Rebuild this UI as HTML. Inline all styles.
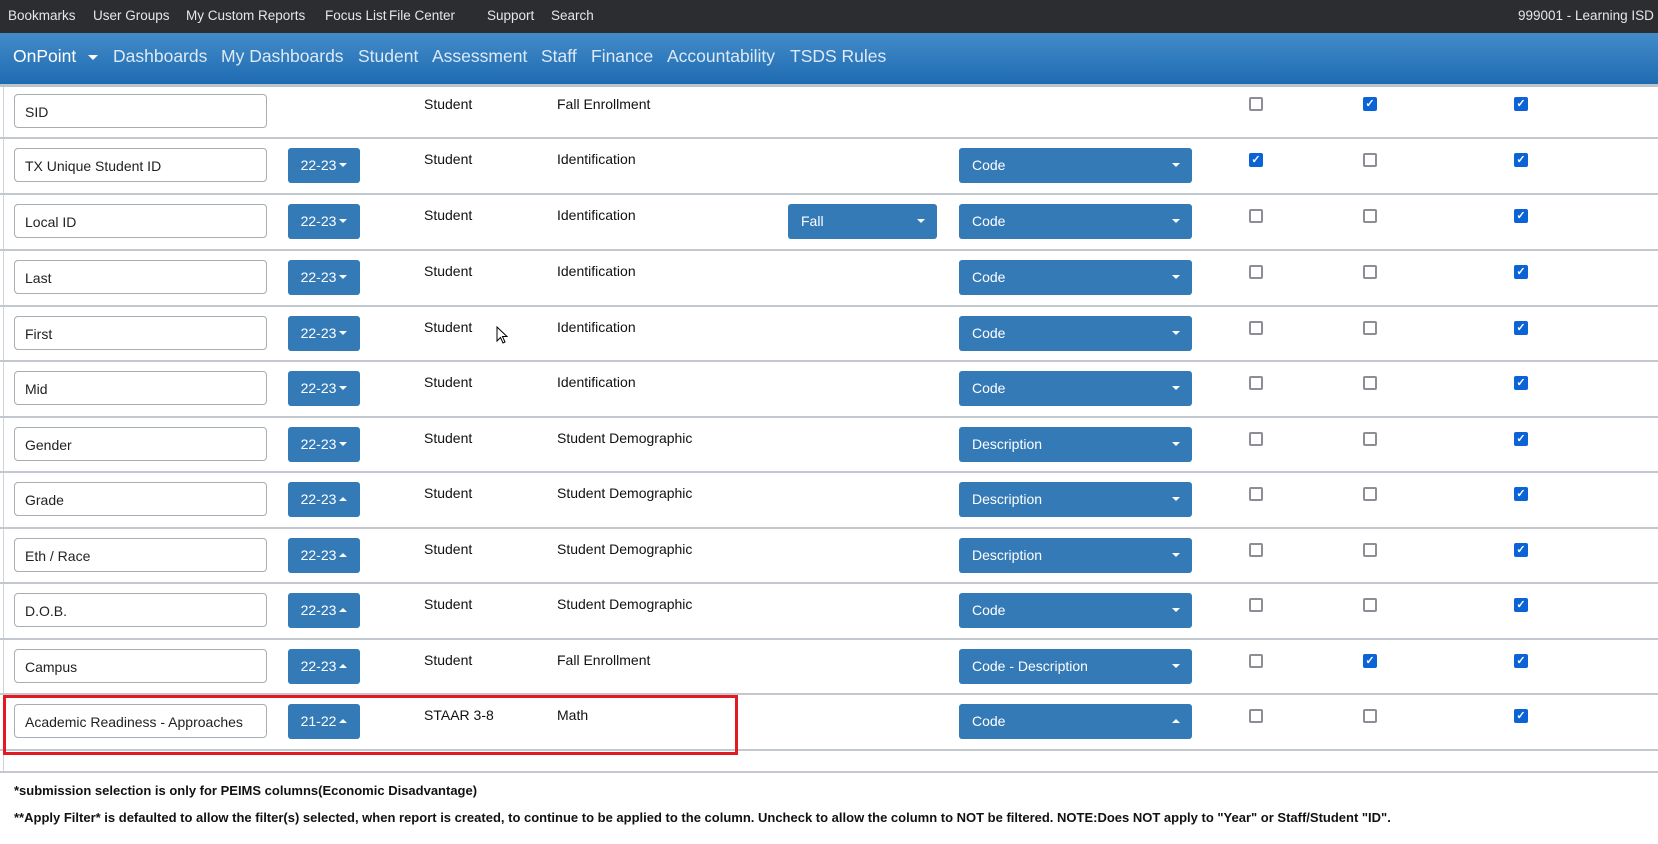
<!DOCTYPE html>
<html><head><meta charset="utf-8"><style>
*{box-sizing:border-box;margin:0;padding:0}
body{width:1658px;height:844px;overflow:hidden;background:#fff;font-family:"Liberation Sans",Arial,sans-serif;position:relative;color:#111}
.top{position:absolute;left:0;top:0;width:1658px;height:33px;background:#2b2d31;color:#e6e6e6;font-size:13.5px}
.top span{position:absolute;top:8px;white-space:nowrap}
.nav{position:absolute;left:0;top:33px;width:1658px;height:54px;background:linear-gradient(#438cc9,#1f6bb2);border-bottom:3px solid #bcc4cb}
.nav span{position:absolute;top:13px;font-size:17.5px;color:#dce9f6;white-space:nowrap}
.vl{position:absolute;left:3px;top:87px;width:1px;height:684px;background:#cdd3d8}
.sep{position:absolute;left:0;width:1658px;height:2px;background:#c2c8ce}
.in{position:absolute;left:14px;width:253px;height:34px;border:1px solid #a9acb0;border-radius:4px;font-size:14px;padding:9px 10px;color:#222;white-space:nowrap}
.b{position:absolute;background:#337ab7;color:#fff;border-radius:3px;height:35px;font-size:14px;padding-top:9px;white-space:nowrap}
.yr{left:288px;width:72px;text-align:center}
.dd{left:959px;width:233px;padding-left:13px}
.fall{left:788px;width:149px;padding-left:13px}
.car{position:absolute;right:12px;top:15px;width:0;height:0;border-left:4px solid transparent;border-right:4px solid transparent;border-top:4px solid #fff}
.up{border-top:none;border-bottom:4px solid #fff}
.yc{display:inline-block;width:0;height:0;border-left:4px solid transparent;border-right:4px solid transparent;border-top:4px solid #fff;vertical-align:middle;margin-left:3px;margin-top:-2px}
.yc.up{border-top:none;border-bottom:4px solid #fff}
.t{position:absolute;font-size:14px;white-space:nowrap;color:#111}
.cb{position:absolute;width:14px;height:14px;border:2px solid #8d8d96;border-radius:2px}
.cb.on{border:none;background:#0b63d6;color:#fff;font-size:11px;line-height:14px;text-align:center;font-weight:bold}
.red{position:absolute;left:3px;top:695px;width:735px;height:60px;border:3px solid #e21b23}
.f{position:absolute;left:14px;font-size:13px;font-weight:bold;white-space:nowrap;color:#111}
</style></head><body>
<div class="top">
<span style="left:8px">Bookmarks</span><span style="left:93px">User Groups</span><span style="left:186px">My Custom Reports</span><span style="left:325px">Focus List</span><span style="left:389px">File Center</span><span style="left:487px">Support</span><span style="left:551px">Search</span><span style="left:1518px">999001 - Learning ISD</span>
</div>
<div class="nav">
<span style="left:13px;color:#fff">OnPoint</span><i style="position:absolute;left:88px;top:22px;border-left:5px solid transparent;border-right:5px solid transparent;border-top:5px solid #fff"></i>
<span style="left:113px">Dashboards</span><span style="left:221px">My Dashboards</span><span style="left:358px">Student</span><span style="left:432px">Assessment</span><span style="left:541px">Staff</span><span style="left:591px">Finance</span><span style="left:667px">Accountability</span><span style="left:790px">TSDS Rules</span>
</div>
<div class="vl"></div>

<div class="in" style="top:94px">SID</div>
<div class="t" style="left:424px;top:96px">Student</div><div class="t" style="left:557px;top:96px">Fall Enrollment</div>
<div class="cb" style="left:1249px;top:97px"></div><div class="cb on" style="left:1363px;top:97px">✓</div><div class="cb on" style="left:1514px;top:97px">✓</div>
<div class="sep" style="top:137px"></div>

<div class="in" style="top:148px">TX Unique Student ID</div>
<div class="b yr" style="top:148px">22-23<i class="yc"></i></div>
<div class="t" style="left:424px;top:151px">Student</div><div class="t" style="left:557px;top:151px">Identification</div>
<div class="b dd" style="top:148px">Code<i class="car"></i></div>
<div class="cb on" style="left:1249px;top:153px">✓</div><div class="cb" style="left:1363px;top:153px"></div><div class="cb on" style="left:1514px;top:153px">✓</div>
<div class="sep" style="top:193px"></div>

<div class="in" style="top:204px">Local ID</div>
<div class="b yr" style="top:204px">22-23<i class="yc"></i></div>
<div class="t" style="left:424px;top:207px">Student</div><div class="t" style="left:557px;top:207px">Identification</div>
<div class="b fall" style="top:204px">Fall<i class="car"></i></div>
<div class="b dd" style="top:204px">Code<i class="car"></i></div>
<div class="cb" style="left:1249px;top:209px"></div><div class="cb" style="left:1363px;top:209px"></div><div class="cb on" style="left:1514px;top:209px">✓</div>
<div class="sep" style="top:249px"></div>

<div class="in" style="top:260px">Last</div>
<div class="b yr" style="top:260px">22-23<i class="yc"></i></div>
<div class="t" style="left:424px;top:263px">Student</div><div class="t" style="left:557px;top:263px">Identification</div>
<div class="b dd" style="top:260px">Code<i class="car"></i></div>
<div class="cb" style="left:1249px;top:265px"></div><div class="cb" style="left:1363px;top:265px"></div><div class="cb on" style="left:1514px;top:265px">✓</div>
<div class="sep" style="top:305px"></div>

<div class="in" style="top:316px">First</div>
<div class="b yr" style="top:316px">22-23<i class="yc"></i></div>
<div class="t" style="left:424px;top:319px">Student</div><div class="t" style="left:557px;top:319px">Identification</div>
<div class="b dd" style="top:316px">Code<i class="car"></i></div>
<div class="cb" style="left:1249px;top:321px"></div><div class="cb" style="left:1363px;top:321px"></div><div class="cb on" style="left:1514px;top:321px">✓</div>
<div class="sep" style="top:360px"></div>

<div class="in" style="top:371px">Mid</div>
<div class="b yr" style="top:371px">22-23<i class="yc"></i></div>
<div class="t" style="left:424px;top:374px">Student</div><div class="t" style="left:557px;top:374px">Identification</div>
<div class="b dd" style="top:371px">Code<i class="car"></i></div>
<div class="cb" style="left:1249px;top:376px"></div><div class="cb" style="left:1363px;top:376px"></div><div class="cb on" style="left:1514px;top:376px">✓</div>
<div class="sep" style="top:416px"></div>

<div class="in" style="top:427px">Gender</div>
<div class="b yr" style="top:427px">22-23<i class="yc"></i></div>
<div class="t" style="left:424px;top:430px">Student</div><div class="t" style="left:557px;top:430px">Student Demographic</div>
<div class="b dd" style="top:427px">Description<i class="car"></i></div>
<div class="cb" style="left:1249px;top:432px"></div><div class="cb" style="left:1363px;top:432px"></div><div class="cb on" style="left:1514px;top:432px">✓</div>
<div class="sep" style="top:471px"></div>

<div class="in" style="top:482px">Grade</div>
<div class="b yr" style="top:482px">22-23<i class="yc up"></i></div>
<div class="t" style="left:424px;top:485px">Student</div><div class="t" style="left:557px;top:485px">Student Demographic</div>
<div class="b dd" style="top:482px">Description<i class="car"></i></div>
<div class="cb" style="left:1249px;top:487px"></div><div class="cb" style="left:1363px;top:487px"></div><div class="cb on" style="left:1514px;top:487px">✓</div>
<div class="sep" style="top:527px"></div>

<div class="in" style="top:538px">Eth / Race</div>
<div class="b yr" style="top:538px">22-23<i class="yc up"></i></div>
<div class="t" style="left:424px;top:541px">Student</div><div class="t" style="left:557px;top:541px">Student Demographic</div>
<div class="b dd" style="top:538px">Description<i class="car"></i></div>
<div class="cb" style="left:1249px;top:543px"></div><div class="cb" style="left:1363px;top:543px"></div><div class="cb on" style="left:1514px;top:543px">✓</div>
<div class="sep" style="top:582px"></div>

<div class="in" style="top:593px">D.O.B.</div>
<div class="b yr" style="top:593px">22-23<i class="yc up"></i></div>
<div class="t" style="left:424px;top:596px">Student</div><div class="t" style="left:557px;top:596px">Student Demographic</div>
<div class="b dd" style="top:593px">Code<i class="car"></i></div>
<div class="cb" style="left:1249px;top:598px"></div><div class="cb" style="left:1363px;top:598px"></div><div class="cb on" style="left:1514px;top:598px">✓</div>
<div class="sep" style="top:638px"></div>

<div class="in" style="top:649px">Campus</div>
<div class="b yr" style="top:649px">22-23<i class="yc up"></i></div>
<div class="t" style="left:424px;top:652px">Student</div><div class="t" style="left:557px;top:652px">Fall Enrollment</div>
<div class="b dd" style="top:649px">Code - Description<i class="car"></i></div>
<div class="cb" style="left:1249px;top:654px"></div><div class="cb on" style="left:1363px;top:654px">✓</div><div class="cb on" style="left:1514px;top:654px">✓</div>
<div class="sep" style="top:693px"></div>

<div class="in" style="top:704px">Academic Readiness - Approaches</div>
<div class="b yr" style="top:704px">21-22<i class="yc up"></i></div>
<div class="t" style="left:424px;top:707px">STAAR 3-8</div><div class="t" style="left:557px;top:707px">Math</div>
<div class="b dd" style="top:704px">Code<i class="car up"></i></div>
<div class="cb" style="left:1249px;top:709px"></div><div class="cb" style="left:1363px;top:709px"></div><div class="cb on" style="left:1514px;top:709px">✓</div>
<div class="sep" style="top:749px"></div>
<div class="sep" style="top:771px"></div>

<div class="red"></div>

<svg style="position:absolute;left:496px;top:326px" width="12" height="19" viewBox="0 0 12 19"><path d="M1 1 L1 15 L4.5 11.5 L7 17 L9 16 L6.5 10.5 L11 10.5 Z" fill="#fff" stroke="#000" stroke-width="1"/></svg>

<div class="f" style="top:783px">*submission selection is only for PEIMS columns(Economic Disadvantage)</div>
<div class="f" style="top:810px">**Apply Filter* is defaulted to allow the filter(s) selected, when report is created, to continue to be applied to the column. Uncheck to allow the column to NOT be filtered. NOTE:Does NOT apply to "Year" or Staff/Student "ID".</div>
</body></html>
